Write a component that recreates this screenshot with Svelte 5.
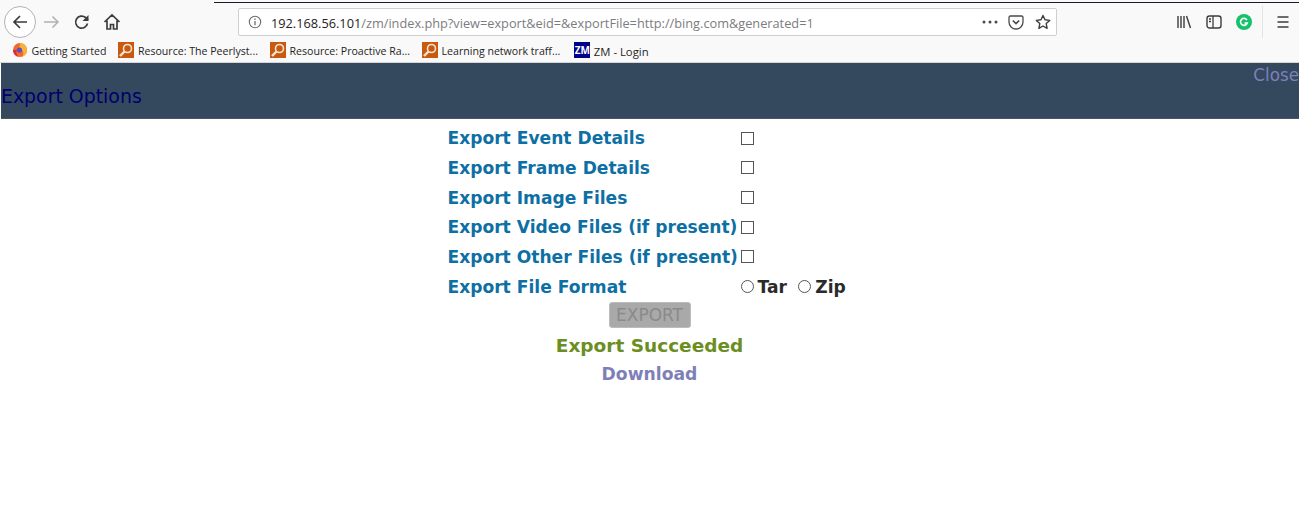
<script>
	const bookmarks = [
		{ label: 'Getting Started', icon: 'firefox' },
		{ label: 'Resource: The Peerlyst...', icon: 'search' },
		{ label: 'Resource: Proactive Ra...', icon: 'search' },
		{ label: 'Learning network traff...', icon: 'search' },
		{ label: 'ZM - Login', icon: 'zm' }
	];

	const checks = [
		'Export Event Details',
		'Export Frame Details',
		'Export Image Files',
		'Export Video Files (if present)',
		'Export Other Files (if present)'
	];
</script>

<div class="page">
	<div class="browser">
		<div class="topline"></div>
		<div class="toolbar">
			<button class="nav back" aria-label="Back">
				<svg width="18" height="18" viewBox="0 0 18 18"><path d="M16 9H3M9 3L3 9l6 6" fill="none" stroke="#3a3a3c" stroke-width="1.7" /></svg>
			</button>
			<span class="ico forward">
				<svg width="18" height="18" viewBox="0 0 18 18"><path d="M1 9h14M9.500 3.500L15 9l-5.500 5.500" fill="none" stroke="#b1b1b3" stroke-width="1.500" /></svg>
			</span>
			<span class="ico reload">
				<svg width="18" height="18" viewBox="0 0 18 18"><path d="M14.500 10.500A6 6 0 1 1 12.500 4.500L15 7" fill="none" stroke="#3d3d3f" stroke-width="1.700" /><path d="M15.500 2v6h-6z" fill="#3d3d3f" /></svg>
			</span>
			<span class="ico home">
				<svg width="18" height="18" viewBox="0 0 18 18"><path d="M1.500 9L9 2l7.500 7M4 7.500V16h3.500v-4.500h3V16H14V7.500" fill="none" stroke="#3d3d3f" stroke-width="1.700" /></svg>
			</span>

			<div class="urlbar">
				<svg class="info" width="14" height="14" viewBox="0 0 14 14"><circle cx="7" cy="7" r="5.700" fill="none" stroke="#6d6d6f" stroke-width="1.100" /><path d="M7 6v4.200M7 3.500v1.400" stroke="#6d6d6f" stroke-width="1.300" /></svg>
				<span class="url"><span class="host">192.168.56.101</span>/zm/index.php?view=export&amp;eid=&amp;exportFile=http://bing.com&amp;generated=1</span>
				<svg class="dots" width="16" height="4" viewBox="0 0 16 4"><circle cx="2" cy="2" r="1.500" fill="#4a4a4c" /><circle cx="8" cy="2" r="1.500" fill="#4a4a4c" /><circle cx="14" cy="2" r="1.500" fill="#4a4a4c" /></svg>
				<svg class="pocket" width="16" height="16" viewBox="0 0 16 16"><path d="M2.500 2h11A1.500 1.500 0 0 1 15 3.500V8a7 7 0 0 1-14 0V3.500A1.500 1.500 0 0 1 2.500 2z" fill="none" stroke="#4a4a4c" stroke-width="1.300" /><path d="M4.800 6.500L8 9.500l3.200-3" fill="none" stroke="#4a4a4c" stroke-width="1.700" /></svg>
				<svg class="star" width="16" height="16" viewBox="0 0 16 16"><path d="M8 1.500l2 4.300 4.700.6-3.500 3.200.9 4.700L8 12l-4.100 2.300.9-4.700L1.300 6.400 6 5.800z" fill="none" stroke="#3d3d3f" stroke-width="1.400" stroke-linejoin="round" /></svg>
			</div>

			<div class="tools">
				<svg width="16" height="16" viewBox="0 0 16 16"><path d="M2 2v12M5 2v12M8 2v12M10.500 2l4 12" fill="none" stroke="#3d3d3f" stroke-width="1.400" /></svg>
				<svg width="16" height="16" viewBox="0 0 16 16"><rect x="1" y="2" width="14" height="12" rx="2.500" fill="none" stroke="#3d3d3f" stroke-width="1.400" /><path d="M7 2v12M3 5h2M3 7.500h2" stroke="#3d3d3f" stroke-width="1.300" /></svg>
				<svg width="16" height="16" viewBox="0 0 16 16"><circle cx="8" cy="8" r="8" fill="#15c26b" /><path d="M11 6a3.500 3.500 0 1 0 .3 3H8.500" fill="none" stroke="#fff" stroke-width="1.600" /></svg>
				<span class="sep"></span>
				<svg width="16" height="16" viewBox="0 0 16 16"><path d="M2.500 3h11M2.500 8h11M2.500 13h11" stroke="#3d3d3f" stroke-width="1.500" /></svg>
			</div>
		</div>

		<div class="bookmarks">
			{#each bookmarks as b}
				<span class="bookmark">
					{#if b.icon === 'firefox'}
						<svg width="16" height="16" viewBox="0 0 16 16"><circle cx="8" cy="8" r="7" fill="#f0682a" /><path d="M8 1a7 7 0 0 1 7 7 7 7 0 0 1-5 6.700C12 13 12 9 9 8 7 7.300 7 5 8 3z" fill="#fbb03b" /><path d="M1 8a7 7 0 0 0 6 7c-3-2-3-5-2-7z" fill="#e0273f" /><circle cx="7.500" cy="8" r="2.600" fill="#5a4fc5" /></svg>
					{:else if b.icon === 'search'}
						<svg width="16" height="16" viewBox="0 0 16 16"><rect width="16" height="16" fill="#c8590f" /><circle cx="9.500" cy="6.500" r="4" fill="#c8590f" stroke="#f6e7d4" stroke-width="1.600" /><path d="M6.500 9.500L2 14" stroke="#f6e7d4" stroke-width="2.400" /></svg>
					{:else}
						<span class="zm">ZM</span>
					{/if}
					<span class="label" class:wide={b.icon === 'zm'}>{b.label}</span>
				</span>
			{/each}
		</div>
	</div>

	<header class="head">
		<div class="head-top"><a href="#close" class="close">Close</a></div>
		<h2>Export Options</h2>
	</header>

	<form class="content">
		<table>
			<tbody>
				{#each checks as label}
					<tr>
						<th>{label}</th>
						<td><span class="box"></span></td>
					</tr>
				{/each}
				<tr>
					<th>Export File Format</th>
					<td class="format">
						<span class="radio"></span><b>Tar</b>
						<span class="radio second"></span><b>Zip</b>
					</td>
				</tr>
			</tbody>
		</table>
		<button type="button" class="export" disabled>EXPORT</button>
		<h3>Export Succeeded</h3>
		<a href="#download" class="download">Download</a>
	</form>
</div>

<style>
	:global(body) {
		background: #fff;
	}
	.page {
		width: 1299px;
		height: 508px;
		background: #fff;
		font-family: "DejaVu Sans", sans-serif;
	}
	.browser {
		height: 63px;
		background: #f9f9fa;
		border-bottom: 1px solid #d6d6d8;
		box-sizing: border-box;
		overflow: hidden;
	}
	.topline {
		height: 3px;
		margin-left: 214px;
		border-bottom: 1px solid #1a1a2a;
		box-sizing: border-box;
	}
	.toolbar {
		display: flex;
		align-items: center;
		height: 33px;
		margin-top: 2px;
		padding-left: 4px;
	}
	.nav {
		width: 32px;
		height: 32px;
		padding: 0;
		border: 1px solid #b4b4b6;
		border-radius: 50%;
		background: #fff;
		display: flex;
		align-items: center;
		justify-content: center;
	}
	.ico {
		display: flex;
		width: 30px;
		justify-content: center;
	}
	.forward {
		margin-left: 1px;
	}
	.urlbar {
		display: flex;
		align-items: center;
		width: 819px;
		height: 28px;
		box-sizing: border-box;
		margin-left: 111px;
		padding: 0 5px 0 9px;
		background: #fff;
		border: 1px solid #cfcfd1;
		border-radius: 2px;
		font-family: "Open Sans", sans-serif;
		font-size: 12.750px;
		color: #7c7c7e;
		white-space: nowrap;
	}
	.url {
		margin-left: 9px;
		padding-top: 2px;
		flex: 1;
	}
	.host {
		color: #222;
	}
	.dots {
		margin-right: 10px;
	}
	.star {
		margin-left: 11px;
	}
	.tools {
		display: flex;
		align-items: center;
		gap: 14px;
		margin-left: 119px;
	}
	.sep {
		width: 1px;
		height: 32px;
		background: #e3e3e5;
		margin: 0 -2px 0 -4px;
	}
	.bookmarks {
		display: flex;
		align-items: center;
		gap: 12px;
		height: 24px;
		padding-left: 12px;
		font-family: "Open Sans", sans-serif;
		font-size: 10.600px;
		color: #1f1f21;
		white-space: nowrap;
	}
	.bookmark {
		display: flex;
		align-items: center;
		gap: 3.500px;
	}
	.label {
		padding-top: 2px;
	}
	.label.wide {
		font-size: 11.300px;
	}
	.zm {
		width: 16px;
		height: 16px;
		margin-left: 2px;
		background: #00008b;
		color: #fff;
		font-size: 10px;
		font-weight: 700;
		line-height: 16px;
		text-align: center;
		overflow: hidden;
	}
	.head {
		margin-left: 1px;
		height: 56px;
		box-sizing: border-box;
		background: #34495e;
		border-bottom: 1px solid #4e5660;
	}
	.head-top {
		height: 21px;
		text-align: right;
		overflow: hidden;
	}
	.close {
		font-size: 16.800px;
		line-height: 24px;
		color: #7c80ba;
		text-decoration: none;
	}
	h2 {
		margin: 0;
		font-size: 18.900px;
		font-weight: 400;
		line-height: 24px;
		color: #00006e;
	}
	.content {
		display: flex;
		flex-direction: column;
		align-items: center;
		padding-top: 4.400px;
	}
	table {
		border-collapse: collapse;
		width: 404px;
	}
	tr {
		height: 29.700px;
	}
	th {
		width: 293px;
		padding: 0;
		text-align: left;
		font-size: 17.100px;
		font-weight: 700;
		color: #0d6fa3;
		white-space: nowrap;
	}
	td {
		padding: 0;
		vertical-align: middle;
	}
	.box {
		display: block;
		width: 11px;
		height: 11px;
		border: 1px solid #555;
	}
	.format {
		font-size: 17.100px;
		color: #2a2a2a;
		white-space: nowrap;
	}
	.format b {
		margin-left: 4px;
	}
	.radio {
		display: inline-block;
		width: 11px;
		height: 11px;
		border: 1px solid #555;
		border-radius: 50%;
	}
	.second {
		margin-left: 6px;
	}
	.export {
		width: 82px;
		height: 26px;
		margin-top: 0;
		padding: 0;
		background: #a9a9a9;
		border: 1px solid #bcbcbc;
		border-radius: 3px;
		font-family: "DejaVu Sans", sans-serif;
		font-size: 17px;
		color: #8a8a8a;
	}
	h3 {
		margin: 5.600px 0 0;
		font-size: 18.500px;
		line-height: 26px;
		font-weight: 700;
		color: #6b8e23;
	}
	.download {
		margin-top: 3.500px;
		font-size: 17.200px;
		line-height: 22px;
		font-weight: 700;
		color: #7f7fb8;
		text-decoration: none;
	}
</style>
